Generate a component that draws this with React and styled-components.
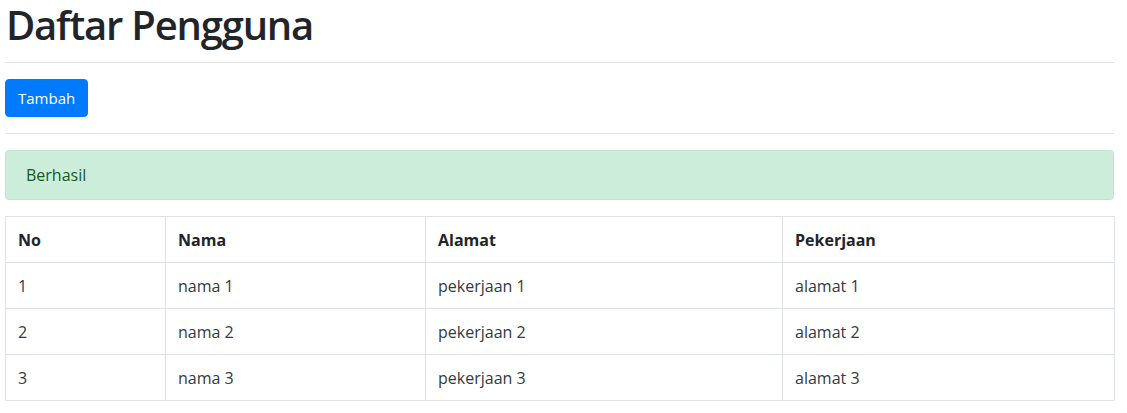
import React from "react";
import styled, { createGlobalStyle } from "styled-components";

const GlobalStyle = createGlobalStyle`
  * {
    box-sizing: border-box;
  }
  body {
    margin: 0;
    background: #fff;
    color: #212529;
    font-family: "Open Sans", "Noto Sans", sans-serif;
    font-size: 16px;
    line-height: 1.5;
  }
`;

const Page = styled.div`
  width: 1109px;
  margin-left: 5px;
`;

const Title = styled.h1`
  margin: 0;
  padding: 1px 0 1px 1px;
  font-size: 40px;
  font-weight: 600;
  line-height: 48px;
  letter-spacing: -1.2px;
`;

const Divider = styled.hr`
  margin: ${(p) => p.$top || 16}px 0 16px;
  border: 0;
  border-top: 1px solid #e3e3e3;
`;

const Button = styled.button`
  display: block;
  height: 38px;
  padding: 0 12px;
  border: 1px solid #007bff;
  border-radius: 4px;
  background: #007bff;
  color: #fff;
  font-family: inherit;
  font-size: 15px;
  cursor: pointer;
`;

const Alert = styled.div`
  height: 50px;
  padding: 0 20px;
  display: flex;
  align-items: center;
  margin-bottom: 16px;
  background: #cdeddb;
  border: 1px solid #bfe5cf;
  border-radius: 4px;
  color: #155724;
`;

const Table = styled.table`
  width: 100%;
  border-collapse: collapse;
  table-layout: fixed;
`;

const Cell = styled.td`
  height: 46px;
  padding: 0 12px;
  border: 1px solid #dee2e6;
  text-align: left;
  vertical-align: middle;
  font-weight: ${(p) => (p.$head ? 700 : 400)};
  color: ${(p) => (p.$head ? "#212529" : "#333a40")};
`;

const columns = [
  { label: "No", width: 160 },
  { label: "Nama", width: 260 },
  { label: "Alamat", width: 357 },
  { label: "Pekerjaan", width: 332 },
];

const rows = [1, 2, 3].map((n) => [
  String(n),
  `nama ${n}`,
  `pekerjaan ${n}`,
  `alamat ${n}`,
]);

export default function App() {
  return (
    <>
      <GlobalStyle />
      <Page>
        <Title>Daftar Pengguna</Title>
        <Divider $top={12} />
        <Button>Tambah</Button>
        <Divider />
        <Alert>Berhasil</Alert>
        <Table>
          <colgroup>
            {columns.map((c) => (
              <col key={c.label} style={{ width: c.width }} />
            ))}
          </colgroup>
          <thead>
            <tr>
              {columns.map((c) => (
                <Cell as="th" $head key={c.label}>
                  {c.label}
                </Cell>
              ))}
            </tr>
          </thead>
          <tbody>
            {rows.map((r) => (
              <tr key={r[0]}>
                {r.map((v, i) => (
                  <Cell key={i}>{v}</Cell>
                ))}
              </tr>
            ))}
          </tbody>
        </Table>
      </Page>
    </>
  );
}
